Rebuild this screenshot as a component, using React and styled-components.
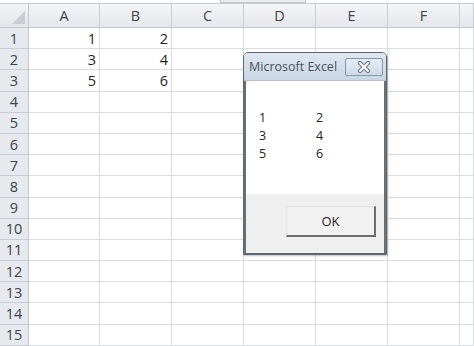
import { Fragment } from 'react';
import styled, { createGlobalStyle } from 'styled-components';

const GlobalStyle = createGlobalStyle`
  html, body {
    margin: 0;
    padding: 0;
    background: #ffffff;
  }
  * {
    box-sizing: border-box;
  }
`;

const Page = styled.div`
  position: relative;
  width: 474px;
  height: 346px;
  overflow: hidden;
  background: #ffffff;
  font-family: 'Open Sans', 'Noto Sans', sans-serif;
`;

const TopStrip = styled.div`
  display: flex;
  height: 4px;
  border-bottom: 1px solid #c9ccd1;
  padding-left: 220px;
`;

const FormulaBox = styled.div`
  width: 86px;
  height: 3px;
  background: #eceef1;
  border: 1px solid #c2c6cc;
  border-top: none;
`;

const Sheet = styled.div`
  display: grid;
  grid-template-columns: 29px 71px repeat(5, 72px) 1fr;
  grid-template-rows: 24px repeat(16, 21.2px);
`;

const Corner = styled.div`
  position: relative;
  background: linear-gradient(#f1f3f6, #e3e6ea);
  border-right: 1px solid #c3c7cd;
  border-bottom: 1px solid #c3c7cd;

  &::after {
    content: '';
    position: absolute;
    right: 3px;
    bottom: 3px;
    border-left: 13px solid transparent;
    border-bottom: 13px solid #c9cdd2;
  }
`;

const ColHead = styled.div`
  display: flex;
  align-items: center;
  justify-content: center;
  background: linear-gradient(#f3f5f8, #e4e7eb);
  border-right: 1px solid #c9cdd3;
  border-bottom: 1px solid #c3c7cd;
  color: #3e4349;
  font-size: 14.5px;
`;

const RowHead = styled.div`
  display: flex;
  align-items: center;
  justify-content: center;
  background: #e6e9ed;
  border-right: 1px solid #c3c7cd;
  border-bottom: 1px solid #c9cdd3;
  color: #3e4349;
  font-size: 14.5px;
`;

const Cell = styled.div`
  display: flex;
  align-items: center;
  justify-content: flex-end;
  padding-right: 3px;
  border-right: 1px solid #dadcdf;
  border-bottom: 1px solid #dadcdf;
  color: #1f1f1f;
  font-size: 14.5px;
`;

const Dialog = styled.div`
  position: absolute;
  left: 243px;
  top: 52px;
  width: 144px;
  height: 203px;
  display: flex;
  flex-direction: column;
  border: 1px solid #5f6670;
  border-radius: 5px 5px 0 0;
  box-shadow: 1px 1px 2px rgba(0, 0, 0, 0.25);
  font-family: 'Open Sans', 'Noto Sans', sans-serif;
  overflow: hidden;
`;

const TitleBar = styled.div`
  display: flex;
  align-items: center;
  justify-content: space-between;
  height: 28px;
  padding: 0 3px 0 5px;
  background: linear-gradient(#dfe7f0, #c9d6e5);
  border-bottom: 1px solid #b4c0ce;
`;

const Title = styled.span`
  font-size: 12.5px;
  color: #46505c;
`;

const CloseButton = styled.div`
  display: flex;
  align-items: center;
  justify-content: center;
  width: 38px;
  height: 18px;
  border: 1px solid #8798ad;
  border-radius: 2px;
  background: linear-gradient(#e4ebf3, #cfdae7);
`;

const Body = styled.div`
  flex: 1;
  padding: 28px 0 0 13px;
  background: #ffffff;
  border-left: 2px solid #6b7078;
  border-right: 2px solid #6b7078;
`;

const Values = styled.div`
  display: grid;
  grid-template-columns: 57px auto;
  line-height: 18px;
  font-size: 12.5px;
  color: #222;
`;

const Footer = styled.div`
  display: flex;
  justify-content: flex-end;
  align-items: flex-start;
  height: 60px;
  padding: 12px 8px 0 0;
  background: #efefef;
  border-left: 2px solid #6b7078;
  border-right: 2px solid #6b7078;
  border-bottom: 1px solid #5f6670;
`;

const OkButton = styled.div`
  display: flex;
  align-items: center;
  justify-content: center;
  width: 90px;
  height: 31px;
  background: #f1f1f1;
  border-top: 1px solid #e2e2e2;
  border-left: 1px solid #e2e2e2;
  border-right: 2px solid #6d6d6d;
  border-bottom: 2px solid #6d6d6d;
  font-size: 13px;
  color: #222;
`;

const columns = ['A', 'B', 'C', 'D', 'E', 'F', 'G'];
const data = {
  1: [1, 2],
  2: [3, 4],
  3: [5, 6],
};

const CloseIcon = () => (
  <svg width="16" height="12" viewBox="0 0 16 12">
    <path d="M4 2 L12 10 M12 2 L4 10" stroke="#6c7b8e" strokeWidth="4.2" strokeLinecap="round" />
    <path d="M4 2 L12 10 M12 2 L4 10" stroke="#ffffff" strokeWidth="2" strokeLinecap="round" />
  </svg>
);

const App = () => {
  const rows = Array.from({ length: 15 }, (_, i) => i + 1);

  return (
    <Page>
      <GlobalStyle />
      <TopStrip>
        <FormulaBox />
      </TopStrip>
      <Sheet>
        <Corner />
        {columns.map(c => (
          <ColHead key={c}>{c === 'G' ? '' : c}</ColHead>
        ))}
        {rows.map(r => (
          <Fragment key={r}>
            <RowHead>{r}</RowHead>
            {columns.map((c, ci) => (
              <Cell key={c}>{data[r] && ci < 2 ? data[r][ci] : ''}</Cell>
            ))}
          </Fragment>
        ))}
      </Sheet>

      <Dialog>
        <TitleBar>
          <Title>Microsoft Excel</Title>
          <CloseButton>
            <CloseIcon />
          </CloseButton>
        </TitleBar>
        <Body>
          <Values>
            <span>1</span>
            <span>2</span>
            <span>3</span>
            <span>4</span>
            <span>5</span>
            <span>6</span>
          </Values>
        </Body>
        <Footer>
          <OkButton>OK</OkButton>
        </Footer>
      </Dialog>
    </Page>
  );
};

export default App;
